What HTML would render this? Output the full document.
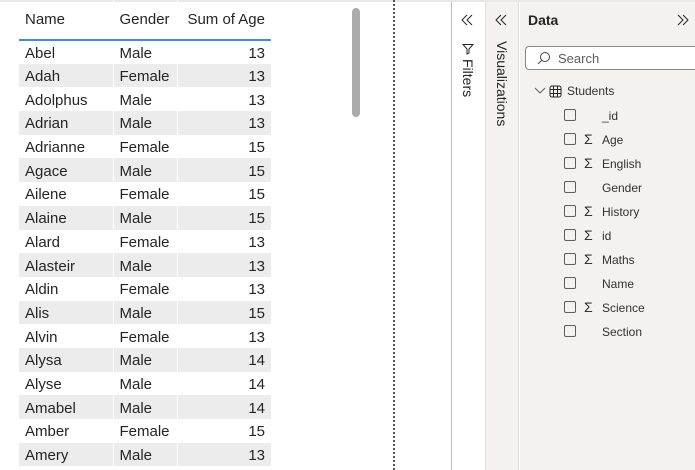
<!DOCTYPE html><html><head><style>
*{margin:0;padding:0;box-sizing:border-box}
body{width:695px;height:470px;overflow:hidden;background:#fff;font-family:"Liberation Sans",sans-serif;position:relative;color:#252423}
.a{position:absolute}
table{border-collapse:collapse;position:absolute;left:19px;top:0}
td,th{font-weight:normal;font-size:15px;height:23.7px;padding:2px 6px 0;white-space:nowrap}
th{height:40px;padding:0 6px;border-bottom:2px solid #3a8ee6;vertical-align:middle;text-align:left}
tr:nth-child(odd) td{background:#ececec}
td.n{width:94px} td.g{width:64px;border-left:1px solid #fff} td.s{width:94px;text-align:right;border-left:1px solid #fff}
.f{font-size:12px;color:#323130}
.cb{position:absolute;left:564px;width:12px;height:12px;border:1px solid #605e5c;border-radius:2px}
.sg{position:absolute;left:584px;font-size:14px;color:#323130}
</style></head><body>
<div class="a" style="left:0;top:0;width:695px;height:2px;background:#e8e8e8"></div>
<table>
<tr><th>Name</th><th style="border-left:1px solid #fff">Gender</th><th style="text-align:right;border-left:1px solid #fff">Sum of Age</th></tr>
<tr><td class="n">Abel</td><td class="g">Male</td><td class="s">13</td></tr>
<tr><td class="n">Adah</td><td class="g">Female</td><td class="s">13</td></tr>
<tr><td class="n">Adolphus</td><td class="g">Male</td><td class="s">13</td></tr>
<tr><td class="n">Adrian</td><td class="g">Male</td><td class="s">13</td></tr>
<tr><td class="n">Adrianne</td><td class="g">Female</td><td class="s">15</td></tr>
<tr><td class="n">Agace</td><td class="g">Male</td><td class="s">15</td></tr>
<tr><td class="n">Ailene</td><td class="g">Female</td><td class="s">15</td></tr>
<tr><td class="n">Alaine</td><td class="g">Male</td><td class="s">15</td></tr>
<tr><td class="n">Alard</td><td class="g">Female</td><td class="s">13</td></tr>
<tr><td class="n">Alasteir</td><td class="g">Male</td><td class="s">13</td></tr>
<tr><td class="n">Aldin</td><td class="g">Female</td><td class="s">13</td></tr>
<tr><td class="n">Alis</td><td class="g">Male</td><td class="s">15</td></tr>
<tr><td class="n">Alvin</td><td class="g">Female</td><td class="s">13</td></tr>
<tr><td class="n">Alysa</td><td class="g">Male</td><td class="s">14</td></tr>
<tr><td class="n">Alyse</td><td class="g">Male</td><td class="s">14</td></tr>
<tr><td class="n">Amabel</td><td class="g">Male</td><td class="s">14</td></tr>
<tr><td class="n">Amber</td><td class="g">Female</td><td class="s">15</td></tr>
<tr><td class="n">Amery</td><td class="g">Male</td><td class="s">13</td></tr>
</table>
<div class="a" style="left:352px;top:8px;width:8px;height:109px;background:#ababab;border-radius:4px"></div>
<div class="a" style="left:393px;top:0;height:470px;border-left:2px dotted #555"></div>
<div class="a" style="left:451px;top:2px;width:1px;height:468px;background:#bdbdbd"></div>
<div class="a" style="left:485px;top:2px;width:34px;height:468px;background:#f3f2f1;border-left:1px solid #e1dfdd;border-right:1px solid #e1dfdd"></div>
<div class="a" style="left:520px;top:2px;width:175px;height:468px;background:#f3f2f1"></div>
<svg class="a" style="left:461px;top:14px" width="12" height="12"><path d="M6 1L1 6l5 5M11 1L6 6l5 5" fill="none" stroke="#252423"/></svg>
<svg class="a" style="left:495px;top:14px" width="12" height="12"><path d="M6 1L1 6l5 5M11 1L6 6l5 5" fill="none" stroke="#252423"/></svg>
<svg class="a" style="left:677px;top:14px" width="12" height="12"><path d="M1 1l5 5-5 5M6 1l5 5-5 5" fill="none" stroke="#252423"/></svg>
<svg class="a" style="left:462px;top:43px" width="12" height="12" viewBox="0 0 12 12"><path d="M1 1.5h10L7 6v4L5 11V6z" fill="none" stroke="#252423"/></svg>
<div class="a" style="left:476px;top:59px;font-size:14px;transform:rotate(90deg);transform-origin:0 0;white-space:nowrap">Filters</div>
<div class="a" style="left:510px;top:41px;font-size:14px;transform:rotate(90deg);transform-origin:0 0;white-space:nowrap">Visualizations</div>
<div class="a" style="left:528px;top:12px;font-size:14px;font-weight:bold">Data</div>
<div class="a" style="left:525px;top:46px;width:175px;height:24px;background:#fff;border:1px solid #8a8886;border-radius:4px"></div>
<svg class="a" style="left:537px;top:51px" width="14" height="14" viewBox="0 0 14 14"><circle cx="8" cy="6" r="4.5" fill="none" stroke="#444"/><path d="M4.8 9.2L1 13" stroke="#444"/></svg>
<div class="a" style="left:558px;top:51px;font-size:13px;color:#605e5c">Search</div>
<svg class="a" style="left:534px;top:86px" width="12" height="10"><path d="M1 2l5 5 5-5" fill="none" stroke="#605e5c"/></svg>
<svg class="a" style="left:549px;top:85px" width="13" height="13"><rect x="1" y="1" width="11" height="11" rx="2" fill="none" stroke="#252423"/><path d="M1 4.5h11M1 8.5h11M4.5 1v11M8.5 1v11" stroke="#252423"/></svg>
<div class="a f" style="left:567px;top:84px">Students</div>
<div class="cb" style="top:109px"></div><div class="a f" style="left:602px;top:109px">_id</div>
<div class="cb" style="top:133px"></div><div class="sg" style="top:131px">Σ</div><div class="a f" style="left:602px;top:133px">Age</div>
<div class="cb" style="top:157px"></div><div class="sg" style="top:155px">Σ</div><div class="a f" style="left:602px;top:157px">English</div>
<div class="cb" style="top:181px"></div><div class="a f" style="left:602px;top:181px">Gender</div>
<div class="cb" style="top:205px"></div><div class="sg" style="top:203px">Σ</div><div class="a f" style="left:602px;top:205px">History</div>
<div class="cb" style="top:229px"></div><div class="sg" style="top:227px">Σ</div><div class="a f" style="left:602px;top:229px">id</div>
<div class="cb" style="top:253px"></div><div class="sg" style="top:251px">Σ</div><div class="a f" style="left:602px;top:253px">Maths</div>
<div class="cb" style="top:277px"></div><div class="a f" style="left:602px;top:277px">Name</div>
<div class="cb" style="top:301px"></div><div class="sg" style="top:299px">Σ</div><div class="a f" style="left:602px;top:301px">Science</div>
<div class="cb" style="top:325px"></div><div class="a f" style="left:602px;top:325px">Section</div>
</body></html>
